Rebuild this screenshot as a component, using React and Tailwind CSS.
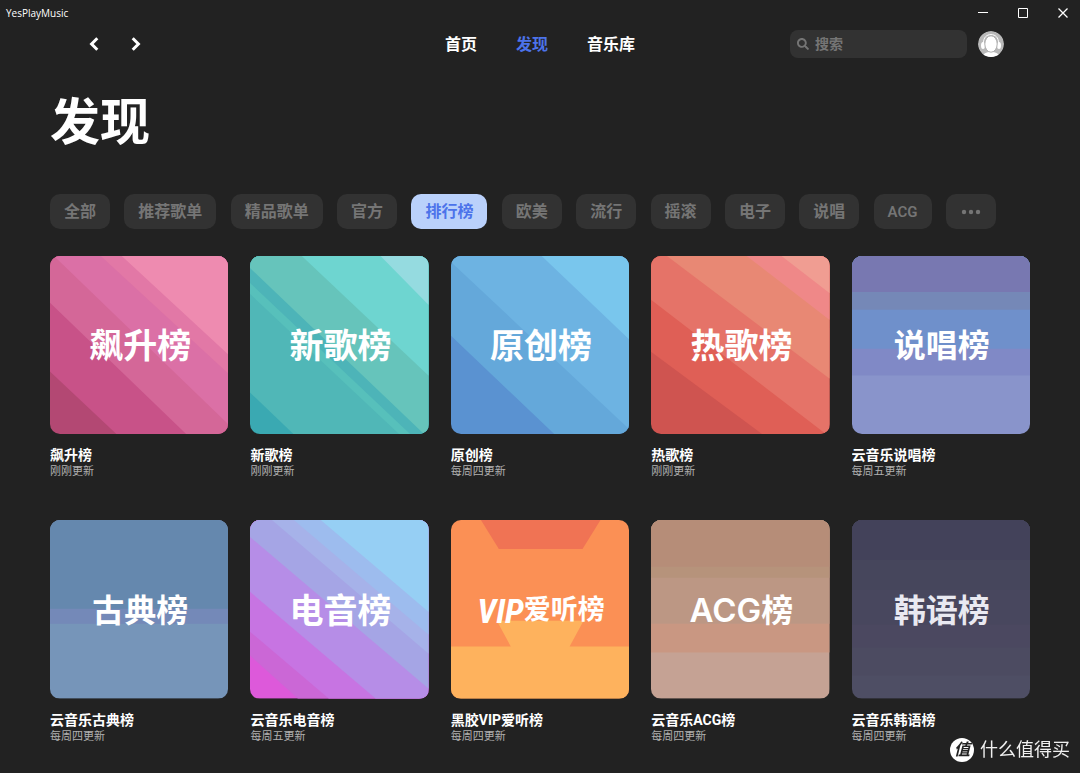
import React, { useState } from 'react';
import clsx from 'clsx';
import { FaSearch } from 'react-icons/fa';

const NAV = [
    { label: '首页', href: '#home' },
    { label: '发现', href: '#explore', active: true },
    { label: '音乐库', href: '#library' },
];

const CATEGORIES = ['全部', '推荐歌单', '精品歌单', '官方', '排行榜', '欧美', '流行', '摇滚', '电子', '说唱', 'ACG'];

// Each layer is painted over the previous one, on a 179 x 179 canvas
const CHARTS = [
    {
        title: '飙升榜',
        update: '刚刚更新',
        label: '飙升榜',
        labelClass: 'text-[34px] text-white',
        base: '#b34873',
        layers: [
            ['#c85288', '0,0 179,0 179,179 67,179 0,116'],
            ['#d46798', '0,0 179,0 179,179 137,179 0,47'],
            ['#db70a6', '4,0 179,0 179,169'],
            ['#e278a6', '51,0 179,0 179,118'],
            ['#ee8bb0', '72,0 179,0 179,99'],
        ],
    },
    {
        title: '新歌榜',
        update: '刚刚更新',
        label: '新歌榜',
        labelClass: 'text-[34px] text-white',
        base: '#3aa9b2',
        layers: [
            ['#50b7b7', '0,0 179,0 179,179 44,179 0,137'],
            ['#57c0bb', '0,0 179,0 179,179 150,179 0,38'],
            ['#4db4b8', '0,0 179,0 179,179 161,179 0,27'],
            ['#66c4bb', '0,0 179,0 179,179 175,179 0,12'],
            ['#6ed5d0', '52,0 179,0 179,120'],
            ['#95dbe0', '131,0 179,0 179,49'],
        ],
    },
    {
        title: '原创榜',
        update: '每周四更新',
        label: '原创榜',
        labelClass: 'text-[34px] text-white',
        base: '#5a92d1',
        layers: [
            ['#64a8da', '0,0 179,0 179,179 104,179 0,80'],
            ['#6db3e2', '0,0 179,0 179,174 0,6'],
            ['#79c6ed', '91,0 179,0 179,84'],
        ],
    },
    {
        title: '热歌榜',
        update: '刚刚更新',
        label: '热歌榜',
        labelClass: 'text-[34px] text-white',
        base: '#cf5450',
        layers: [
            ['#df5f56', '0,0 179,0 179,179 112,179 0,96'],
            ['#e57368', '0,0 179,0 179,179 176,179 0,44'],
            ['#e88874', '16,0 179,0 179,123'],
            ['#ef8888', '96,0 179,0 179,64'],
            ['#f09d92', '131,0 179,0 179,37'],
        ],
    },
    {
        title: '云音乐说唱榜',
        update: '每周五更新',
        label: '说唱榜',
        labelClass: 'text-[32px] text-white',
        base: '#8994cb',
        layers: [
            ['#8089c6', '0,0 179,0 179,120 0,120'],
            ['#6f90cb', '0,0 179,0 179,93 0,93'],
            ['#7588b7', '0,0 179,0 179,54 0,54'],
            ['#7878b1', '0,0 179,0 179,36 0,36'],
        ],
    },
    {
        title: '云音乐古典榜',
        update: '每周四更新',
        label: '古典榜',
        labelClass: 'text-[32px] text-white',
        base: '#7695b9',
        layers: [
            ['#7489b8', '0,0 179,0 179,104 0,104'],
            ['#6588ae', '0,0 179,0 179,89 0,89'],
        ],
    },
    {
        title: '云音乐电音榜',
        update: '每周五更新',
        label: '电音榜',
        labelClass: 'text-[34px] text-white',
        base: '#dd59da',
        layers: [
            ['#cb67d6', '0,0 179,0 179,179 48,179 0,136'],
            ['#c774e2', '0,0 179,0 179,179 79,179 0,112'],
            ['#b68de7', '0,0 179,0 179,179 126,179 0,72'],
            ['#a5a5e5', '0,0 179,0 179,169 0,17'],
            ['#a6b2e9', '22,0 179,0 179,134'],
            ['#9dbcee', '44,0 179,0 179,115'],
            ['#96cff4', '71,0 179,0 179,92'],
        ],
    },
    {
        title: '黑胶VIP爱听榜',
        update: '每周四更新',
        prefix: 'VIP',
        prefixClass: "text-[34px] font-bold italic font-['Liberation_Sans_Narrow','Roboto_Condensed','Liberation_Sans',sans-serif]",
        label: '爱听榜',
        labelClass: 'text-[27px] text-white',
        base: '#fb9055',
        layers: [
            ['#f07354', '30,0 150,0 132,29 48,29'],
            ['#feb25d', '46,101 133,101 119,127 179,127 179,179 0,179 0,127 60,127'],
        ],
    },
    {
        title: '云音乐ACG榜',
        update: '每周四更新',
        prefix: 'ACG',
        prefixClass: "text-[33px] font-semibold font-['Inter',sans-serif]",
        label: '榜',
        labelClass: 'text-[32px] text-white',
        base: '#c5a294',
        layers: [
            ['#c99782', '0,0 179,0 179,133 0,133'],
            ['#bc9784', '0,0 179,0 179,104 0,104'],
            ['#b6937b', '0,0 179,0 179,58 0,58'],
            ['#b68d78', '0,0 179,0 179,47 0,47'],
        ],
    },
    {
        title: '云音乐韩语榜',
        update: '每周四更新',
        label: '韩语榜',
        labelClass: 'text-[32px] text-[#e9e9f1]',
        base: '#4e4e64',
        layers: [
            ['#4c4b61', '0,0 179,0 179,156 0,156'],
            ['#4b4860', '0,0 179,0 179,128 0,128'],
            ['#48475e', '0,0 179,0 179,105 0,105'],
            ['#46465c', '0,0 179,0 179,70 0,70'],
            ['#43425a', '0,0 179,0 179,40 0,40'],
        ],
    },
];

function TitleBar() {
    const button = 'w-8 h-full flex items-center justify-center hover:bg-white/10';
    return (
        <div className="h-[26px] flex items-center justify-between pl-1.5 pr-px">
            <span className="text-[10px] leading-4 font-['Open_Sans','Noto_Sans',sans-serif]">YesPlayMusic</span>
            <div className="h-full flex gap-2">
                <button className={button} aria-label="最小化">
                    <svg width="10" height="10" viewBox="0 0 10 10" stroke="currentColor"><path d="M0 4.500H10" /></svg>
                </button>
                <button className={button} aria-label="最大化">
                    <svg width="10" height="10" viewBox="0 0 10 10" fill="none" stroke="currentColor"><path d="M.5 .5H9.500V9.500H.5Z" /></svg>
                </button>
                <button className={button} aria-label="关闭">
                    <svg width="10" height="10" viewBox="0 0 10 10" stroke="currentColor" strokeWidth="1.3"><path d="M.5 .5L9.500 9.500M9.500 .5L.5 9.500" /></svg>
                </button>
            </div>
        </div>
    );
}

function Avatar() {
    return (
        <svg width="26" height="26" viewBox="0 0 26 26" className="rounded-full">
            <circle cx="13" cy="13" r="13" fill="#b9b9b9" />
            <path d="M4.500 26C5 22.500 8 21 13 21s8 1.500 8.500 5Z" fill="#fff" />
            <path d="M5.500 12C5.500 6.500 8.500 3.600 13 3.600S20.500 6.500 20.500 12" fill="none" stroke="#fff" strokeWidth="1" />
            <ellipse cx="5" cy="14.500" rx="2" ry="3.500" fill="#fff" />
            <ellipse cx="21" cy="14.500" rx="2" ry="3.500" fill="#fff" />
            <ellipse cx="13" cy="13" rx="6.200" ry="8.200" fill="#fff" stroke="#a8a8a8" strokeWidth=".9" />
        </svg>
    );
}

function Header() {
    return (
        <header className="h-9 flex items-center px-[76px]">
            <div className="flex-1 flex items-center gap-1.5">
                <button className="w-9 h-8 flex items-center justify-center rounded-lg hover:bg-white/10" aria-label="后退">
                    <svg width="10" height="14" viewBox="0 0 10 14" fill="none" stroke="currentColor" strokeWidth="3">
                        <path d="M8.300 1.300L2.600 7L8.300 12.700" />
                    </svg>
                </button>
                <button className="w-9 h-8 flex items-center justify-center rounded-lg hover:bg-white/10" aria-label="前进">
                    <svg width="10" height="14" viewBox="0 0 10 14" fill="none" stroke="currentColor" strokeWidth="3">
                        <path d="M1.700 1.300L7.400 7L1.700 12.700" />
                    </svg>
                </button>
            </div>

            <nav className="flex gap-[39px] pt-0.5">
                {NAV.map((item) => (
                    <a
                        key={item.label}
                        href={item.href}
                        className={clsx('text-base leading-6 font-bold', item.active ? 'text-[#4c73ea]' : 'text-white')}
                    >
                        {item.label}
                    </a>
                ))}
            </nav>

            <div className="flex-1 flex items-center justify-end gap-[11px]">
                <label className="w-[177px] h-7 flex items-center gap-1.5 px-[7px] rounded-lg bg-[#323232] text-[#757575]">
                    <FaSearch size={12} className="shrink-0" />
                    <input
                        type="text"
                        aria-label="搜索"
                        placeholder="搜索"
                        className="w-full min-w-0 bg-transparent text-[14px] leading-5 font-bold text-white placeholder:text-[#757575] outline-none"
                    />
                </label>
                <button className="rounded-full" aria-label="用户">
                    <Avatar />
                </button>
            </div>
        </header>
    );
}

function Cover({ chart }) {
    return (
        <div className="grid aspect-square rounded-[10px] overflow-hidden">
            <svg viewBox="0 0 179 179" preserveAspectRatio="none" className="col-start-1 row-start-1 w-full h-full">
                <rect width="179" height="179" fill={chart.base} />
                {chart.layers.map(([color, points]) => (
                    <polygon key={color} points={points} fill={color} />
                ))}
            </svg>
            <div
                className={clsx(
                    'col-start-1 row-start-1 relative flex items-center justify-center pt-0.5 pl-0.5 font-bold leading-none',
                    chart.labelClass
                )}
            >
                {chart.prefix && <span className={chart.prefixClass}>{chart.prefix}</span>}
                <span>{chart.label}</span>
            </div>
        </div>
    );
}

function ChartCard({ chart }) {
    return (
        <a href="#playlist" className="block min-w-0">
            <Cover chart={chart} />
            <div className="mt-3 text-[14px] leading-[18px] font-bold truncate">{chart.title}</div>
            <div className="text-[11px] leading-4 text-[#b0b0b0] truncate">{chart.update}</div>
        </a>
    );
}

function Watermark() {
    return (
        <div className="fixed right-[10px] bottom-[11px] flex items-center gap-1.5 pointer-events-none">
            <span className="w-6 h-6 rounded-full bg-white text-[#222222] flex items-center justify-center text-base leading-none font-bold italic">
                值
            </span>
            <span className="text-[18px] leading-6 text-[#f0f0f0]">什么值得买</span>
        </div>
    );
}

export default function App() {
    const [category, setCategory] = useState('排行榜');

    return (
        <div className="min-h-screen bg-[#222222] text-white font-['Roboto','Noto_Sans_CJK_SC',sans-serif]">
            <TitleBar />
            <Header />

            <main className="px-[50px] pt-[34px] pb-6">
                <h1 className="text-[50px] leading-[54px] font-bold">发现</h1>

                {/* Categories */}
                <div className="mt-11 pr-[34px] flex justify-between">
                    {CATEGORIES.map((name) => (
                        <button
                            key={name}
                            onClick={() => setCategory(name)}
                            className={clsx(
                                'h-[35px] px-3.5 rounded-[10px] leading-6 whitespace-nowrap',
                                name === 'ACG' ? 'text-[15px] font-semibold' : 'text-base font-bold',
                                name === category ? 'bg-[#bad1fb] text-[#4c73ea]' : 'bg-[#323232] text-[#757575]'
                            )}
                        >
                            {name}
                        </button>
                    ))}
                    <button
                        className="h-[35px] px-3.5 rounded-[10px] bg-[#323232] text-[#757575] flex items-center"
                        aria-label="更多"
                    >
                        <svg width="22" height="6" viewBox="0 0 22 6" fill="currentColor">
                            <circle cx="4" cy="3" r="2.200" />
                            <circle cx="11" cy="3" r="2.200" />
                            <circle cx="18" cy="3" r="2.200" />
                        </svg>
                    </button>
                </div>

                {/* Charts */}
                <div className="mt-[27px] grid grid-cols-5 gap-x-[22px] gap-y-10">
                    {CHARTS.map((chart) => (
                        <ChartCard key={chart.title} chart={chart} />
                    ))}
                </div>
            </main>

            <Watermark />
        </div>
    );
}
